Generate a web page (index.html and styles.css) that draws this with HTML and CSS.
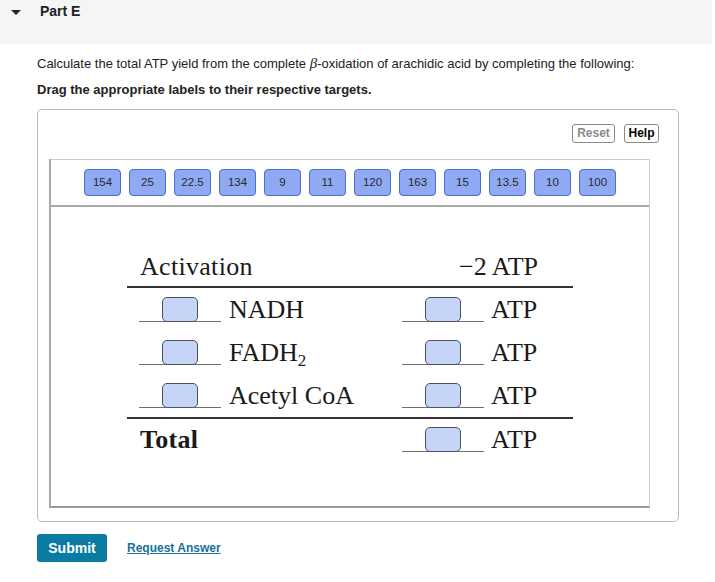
FILE: index.html
```html
<!DOCTYPE html>
<html>
<head>
<meta charset="utf-8">
<link rel="stylesheet" href="styles.css">
</head>
<body>
<div class="part-header">
  <span class="caret"></span>
  <span class="part-title">Part E</span>
</div>
<div class="content">
  <p class="question">Calculate the total ATP yield from the complete <span class="beta">β</span>-oxidation of arachidic acid by completing the following:</p>
  <p class="instruction">Drag the appropriate labels to their respective targets.</p>
  <div class="workbox">
    <div class="toolbar">
      <button class="tool-btn reset">Reset</button>
      <button class="tool-btn help">Help</button>
    </div>
    <div class="panel">
      <div class="label-bar">
        <span class="chip">154</span>
        <span class="chip">25</span>
        <span class="chip">22.5</span>
        <span class="chip">134</span>
        <span class="chip">9</span>
        <span class="chip">11</span>
        <span class="chip">120</span>
        <span class="chip">163</span>
        <span class="chip">15</span>
        <span class="chip">13.5</span>
        <span class="chip">10</span>
        <span class="chip">100</span>
      </div>
      <div class="diagram-area">
        <div class="diagram">
          <div class="row head-row">
            <div class="cell-left"><span class="term pad">Activation</span></div>
            <div class="cell-right end"><span class="term">−2 ATP</span></div>
          </div>
          <div class="rule rule-top"></div>
          <div class="row">
            <div class="cell-left"><span class="blank"><span class="drop"></span></span><span class="term">NADH</span></div>
            <div class="cell-right"><span class="blank"><span class="drop"></span></span><span class="term">ATP</span></div>
          </div>
          <div class="row">
            <div class="cell-left"><span class="blank"><span class="drop"></span></span><span class="term">FADH<sub>2</sub></span></div>
            <div class="cell-right"><span class="blank"><span class="drop"></span></span><span class="term">ATP</span></div>
          </div>
          <div class="row">
            <div class="cell-left"><span class="blank"><span class="drop"></span></span><span class="term">Acetyl CoA</span></div>
            <div class="cell-right"><span class="blank"><span class="drop"></span></span><span class="term">ATP</span></div>
          </div>
          <div class="rule rule-bottom"></div>
          <div class="row total-row">
            <div class="cell-left"><span class="term pad bold">Total</span></div>
            <div class="cell-right"><span class="blank"><span class="drop"></span></span><span class="term">ATP</span></div>
          </div>
        </div>
      </div>
    </div>
  </div>
  <div class="actions">
    <button class="submit">Submit</button>
    <a class="request" href="#">Request Answer</a>
  </div>
</div>
</body>
</html>
```

FILE: styles.css
```css
html, body {
  margin: 0;
  padding: 0;
  background: #ffffff;
  font-family: "Liberation Sans", Arial, Helvetica, sans-serif;
  color: #222;
}

.part-header {
  width: 712px;
  height: 44px;
  background: #f5f5f5;
  display: flex;
  align-items: flex-start;
  box-sizing: border-box;
  padding-top: 3px;
}

.caret {
  width: 0;
  height: 0;
  border-left: 5px solid transparent;
  border-right: 5px solid transparent;
  border-top: 5px solid #222;
  margin-left: 11px;
  margin-top: 7px;
}

.part-title {
  margin-left: 19px;
  font-size: 14px;
  line-height: 17px;
  font-weight: bold;
  color: #222;
}

.content {
  margin-left: 37px;
}

.question {
  margin: 11px 0 0 0;
  font-size: 13px;
  line-height: 16px;
  color: #222;
}

.beta {
  font-family: "Liberation Serif", "Times New Roman", serif;
  font-style: italic;
  font-size: 15px;
}

.instruction {
  margin: 10px 0 0 0;
  font-size: 13px;
  line-height: 16px;
  font-weight: bold;
  color: #222;
}

.workbox {
  margin-top: 11px;
  width: 642px;
  box-sizing: border-box;
  border: 1px solid #bbbbbb;
  border-radius: 5px;
  padding: 14px 19px 13px 11px;
}

.toolbar {
  display: flex;
  justify-content: flex-end;
  gap: 9px;
  height: 19px;
}

.tool-btn {
  height: 19px;
  box-sizing: border-box;
  padding: 0;
  border: 1px solid #8a8a8a;
  border-radius: 3px;
  background: #fff;
  font-family: "Liberation Sans", Arial, sans-serif;
  font-size: 12px;
  font-weight: bold;
  line-height: 17px;
}

.reset {
  width: 43px;
  color: #8a8a8a;
}

.help {
  width: 35px;
  color: #000;
}

.panel {
  margin-top: 16px;
  margin-right: 9px;
  border-top: 1px solid #cccccc;
  border-right: 1px solid #cccccc;
  border-left: 2px solid #a8a8a8;
  border-bottom: 2px solid #999999;
}

.label-bar {
  height: 47px;
  box-sizing: border-box;
  border-bottom: 2px solid #a8a8a8;
  display: flex;
  justify-content: center;
  align-items: flex-start;
  gap: 8px;
  padding-top: 9px;
}

.chip {
  width: 37px;
  height: 27px;
  box-sizing: border-box;
  background: #8fa9f2;
  border: 1px solid #4a6fcc;
  border-radius: 4px;
  font-size: 11.5px;
  line-height: 25px;
  text-align: center;
  color: #2a2a2a;
}

.diagram-area {
  height: 299px;
  box-sizing: border-box;
  padding-top: 47px;
}

.diagram {
  width: 446px;
  margin: 0 auto;
  font-family: "Liberation Serif", "Times New Roman", serif;
  color: #1a1a1a;
}

.row {
  display: grid;
  grid-template-columns: 275px 1fr;
  height: 26px;
  margin-bottom: 17px;
}

.head-row {
  margin-bottom: 0;
}

.total-row {
  margin-bottom: 0;
}

.cell-left {
  display: flex;
  align-items: flex-end;
  padding-left: 12px;
  gap: 8px;
}

.cell-right {
  display: flex;
  align-items: flex-end;
  gap: 7px;
}

.cell-right.end {
  justify-content: flex-end;
  padding-right: 35px;
}

.term {
  font-size: 26px;
  line-height: 26px;
  white-space: nowrap;
}

.term sub {
  font-size: 17px;
  line-height: 0;
  vertical-align: -5px;
}

.term.pad {
  margin-left: 1px;
  letter-spacing: 0.3px;
}

.term.bold {
  font-weight: bold;
}

.blank {
  position: relative;
  width: 82px;
  height: 26px;
  display: flex;
  justify-content: center;
  align-items: flex-start;
  flex-shrink: 0;
}

.blank::after {
  content: "";
  position: absolute;
  left: 0;
  right: 0;
  bottom: 1px;
  height: 1.5px;
  background: #6e6e6e;
}

.drop {
  position: relative;
  z-index: 1;
  width: 36px;
  height: 25px;
  box-sizing: border-box;
  background: #c6d4f7;
  border: 1.5px solid #4b4f62;
  border-radius: 5px;
}

.rule {
  height: 2px;
  background: #333;
}

.rule-top {
  margin-top: 6px;
  margin-bottom: 9px;
}

.rule-bottom {
  margin-top: -9px;
  margin-bottom: 8px;
}

.actions {
  margin-top: 12px;
  display: flex;
  align-items: center;
  gap: 20px;
}

.submit {
  width: 70px;
  height: 28px;
  border: none;
  border-radius: 3px;
  background: #0a7ba1;
  color: #fff;
  font-family: "Liberation Sans", Arial, sans-serif;
  font-size: 14px;
  font-weight: bold;
  padding: 0;
}

.request {
  font-size: 12px;
  font-weight: bold;
  color: #1b6f9c;
  text-decoration: underline;
}
```
